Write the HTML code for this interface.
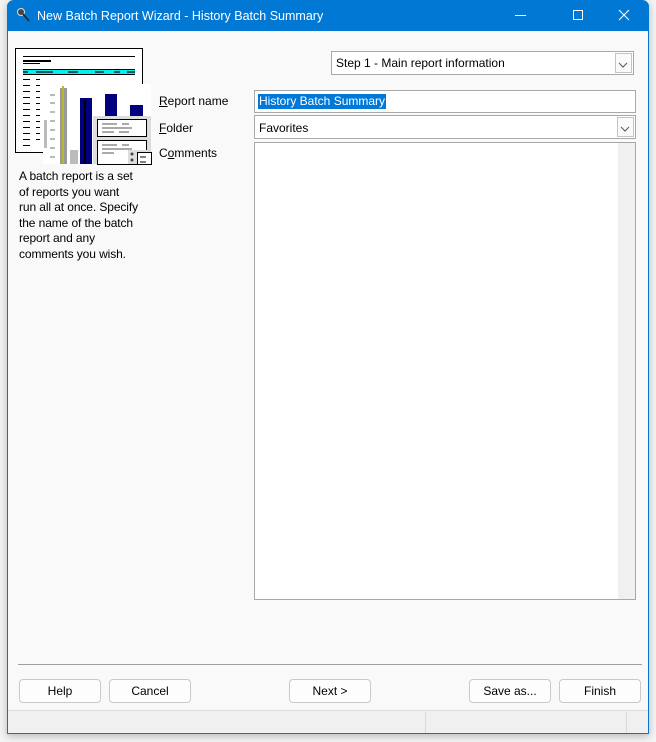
<!DOCTYPE html>
<html><head><style>
*{margin:0;padding:0;box-sizing:border-box}
body{width:656px;height:742px;background:#f3f3f3;position:relative;overflow:hidden;font-family:"Liberation Sans",sans-serif;font-size:12px;color:#000}
.win{position:absolute;left:7px;top:0;width:642px;height:734px;border:1px solid #0a74d0;border-top:none;background:#f9f9f9;border-radius:7px 7px 0 0;box-shadow:0 2px 8px rgba(0,0,0,.25)}
.title{position:absolute;left:-1px;top:0;width:642px;height:31px;background:#0078d4;border-radius:7px 7px 0 0;color:#fff;font-size:12.5px}
.a{position:absolute}
.box{position:absolute;background:#fff;border:1px solid #a8a8a8}
.dd{position:absolute;right:1px;top:1px;width:17px;bottom:1px;border:1px solid #c4c4c4;background:#fafafa}
.btn{position:absolute;top:679px;height:24px;border:1px solid #c9c9c9;border-radius:4px;background:#fdfdfd;text-align:center;line-height:22px;font-size:12px}
</style></head><body>
<div class="win">
<div class="title">
 <svg class="a" style="left:9px;top:7px" width="16" height="16" viewBox="0 0 16 16"><circle cx="5" cy="5" r="3.5" fill="#444" stroke="#ddd" stroke-width="1"/><line x1="7" y1="7" x2="13" y2="14" stroke="#222" stroke-width="1.6"/></svg>
 <div class="a" style="left:30px;top:9px">New Batch Report Wizard - History Batch Summary</div>
 <div class="a" style="left:508px;top:15px;width:11px;height:1px;background:#fff"></div>
 <div class="a" style="left:566px;top:10px;width:10px;height:10px;border:1px solid #fff"></div>
 <svg class="a" style="left:611px;top:9px" width="12" height="12"><path d="M1 1L11 11M11 1L1 11" stroke="#fff" stroke-width="1.1"/></svg>
</div>
</div>
<svg class="a" style="left:0;top:0" width="160" height="170">
 <rect x="15.5" y="48.5" width="127" height="104" fill="#fff" stroke="#000"/>
 <line x1="23" y1="56.5" x2="135" y2="56.5" stroke="#000"/>
 <rect x="23" y="60" width="28" height="2" fill="#000"/>
 <rect x="23" y="63" width="17" height="1" fill="#000"/>
 <rect x="23" y="69" width="112" height="6" fill="#00f0f0"/>
 <line x1="23" y1="69.5" x2="135" y2="69.5" stroke="#000"/><line x1="23" y1="74.5" x2="135" y2="74.5" stroke="#000"/>
 <path d="M23 72H28M36 72H53M68 72H78M95 72H104M114 72H120M127 72H135" stroke="#000" stroke-width="1.3"/>
 <g stroke="#000"><path d="M23 79.5h7M36 79.5h4M23 85.5h7M36 85.5h4M23 91.5h7M36 91.5h4M23 97.5h7M36 97.5h4M23 103.5h7M36 103.5h4M23 109.5h7M36 109.5h4M23 115.5h7M36 115.5h4M23 121.5h7M36 121.5h4M23 127.5h7M36 127.5h4M23 133.5h7M36 133.5h4M23 139.5h7M36 139.5h4M23 145.5h7"/></g>
 <rect x="43" y="84" width="108" height="80" fill="#fff"/>
 <g fill="#bbb"><rect x="50" y="94" width="5" height="2"/><rect x="50" y="102" width="5" height="2"/><rect x="50" y="111" width="5" height="2"/><rect x="50" y="120" width="5" height="2"/><rect x="50" y="129" width="5" height="2"/><rect x="50" y="138" width="5" height="2"/><rect x="50" y="147" width="5" height="2"/><rect x="50" y="156" width="5" height="2"/><rect x="44" y="120" width="3" height="28"/><rect x="70" y="150" width="8" height="14"/></g>
 <rect x="60" y="88" width="7" height="76" fill="#999"/><rect x="62" y="86" width="2" height="78" fill="#b8b830"/>
 <rect x="80" y="98" width="12" height="66" fill="#000080"/><rect x="84" y="100" width="2" height="64" fill="#000"/>
 <rect x="105" y="94" width="12" height="32" fill="#000080"/>
 <rect x="130" y="105" width="13" height="14" fill="#000080"/>
 <rect x="93" y="116" width="58" height="48" fill="#ddd"/>
 <rect x="97.5" y="119.5" width="49" height="17" fill="#fff" stroke="#000"/>
 <path d="M102 124h15M122 124h7M102 128h30M102 132h12M119 132h10" stroke="#777" stroke-width="1.3"/>
 <rect x="97.5" y="140.5" width="49" height="24" fill="#fff" stroke="#000"/>
 <path d="M102 145h15M122 145h7M102 149h30M102 153h12" stroke="#777" stroke-width="1.3"/>
 <rect x="128" y="150" width="23" height="14" fill="#ddd"/>
 <rect x="137.5" y="152.5" width="14" height="12" fill="#fff" stroke="#000"/>
 <circle cx="132" cy="154" r="1.5" fill="#444"/><circle cx="132" cy="160" r="1.5" fill="#444"/>
 <path d="M140 157h6M140 162h6" stroke="#000"/>
</svg>
<div class="a" style="left:19px;top:169px;line-height:15.6px;width:140px;white-space:nowrap;letter-spacing:-0.1px">A batch report is a set<br>of reports you want<br>run all at once. Specify<br>the name of the batch<br>report and any<br>comments you wish.</div>
<div class="box" style="left:331px;top:51px;width:303px;height:24px"><span class="a" style="left:4px;top:4px">Step 1 - Main report information</span><div class="dd"><svg width="15" height="20"><path d="M3 9l4 4 4-4" fill="none" stroke="#555"/></svg></div></div>
<div class="a" style="left:159px;top:94px"><u>R</u>eport name</div>
<div class="a" style="left:159px;top:121px"><u>F</u>older</div>
<div class="a" style="left:159px;top:146px">C<u>o</u>mments</div>
<div class="box" style="left:254px;top:90px;width:382px;height:23px"><span class="a" style="left:3px;top:3px;background:#0078d7;color:#fff;padding:1px 1px;height:15px;line-height:13px">History Batch Summary</span></div>
<div class="box" style="left:254px;top:115px;width:382px;height:24px"><span class="a" style="left:4px;top:5px">Favorites</span><div class="dd"><svg width="15" height="20"><path d="M3 9l4 4 4-4" fill="none" stroke="#555"/></svg></div></div>
<div class="box" style="left:254px;top:142px;width:382px;height:458px"><div class="a" style="right:0;top:0;width:17px;bottom:0;background:#f0f0f0"></div></div>
<div class="a" style="left:18px;top:664px;width:624px;height:1px;background:#a0a0a0"></div>
<div class="btn" style="left:19px;width:82px">Help</div>
<div class="btn" style="left:109px;width:82px">Cancel</div>
<div class="btn" style="left:289px;width:82px">Next &gt;</div>
<div class="btn" style="left:469px;width:82px">Save as...</div>
<div class="btn" style="left:559px;width:82px">Finish</div>
<div class="a" style="left:8px;top:710px;width:640px;height:23px;background:#f0f0f0;border-top:1px solid #dcdcdc"></div>
<div class="a" style="left:425px;top:712px;width:1px;height:21px;background:#dadada"></div>
<div class="a" style="left:626px;top:712px;width:1px;height:21px;background:#dadada"></div>
</body></html>
